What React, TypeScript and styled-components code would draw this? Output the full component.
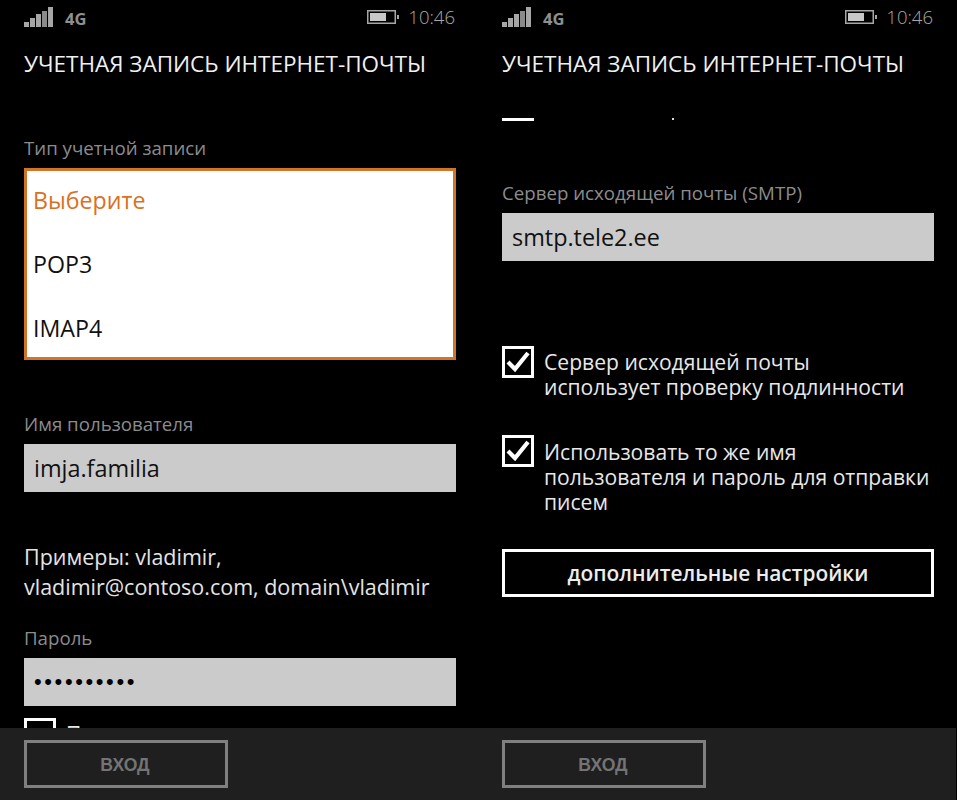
import React from 'react';
import styled, { createGlobalStyle } from 'styled-components';

const GlobalStyle = createGlobalStyle`
  html, body {
    margin: 0;
    padding: 0;
    background: #000;
  }
  * {
    box-sizing: border-box;
  }
`;

const SignalIcon: React.FC = () => (
  <svg width="30" height="20" viewBox="0 0 30 20" fill="#a6a6a6">
    <rect x="0" y="15" width="5" height="5" />
    <rect x="6" y="11" width="5" height="9" />
    <rect x="12" y="7" width="5" height="13" />
    <rect x="18" y="4" width="5" height="16" fill="#8a8a8a" />
    <rect x="24" y="0" width="5" height="20" />
  </svg>
);

const BatteryIcon: React.FC = () => (
  <svg width="32" height="14" viewBox="0 0 32 14">
    <rect x="0.75" y="0.75" width="27.5" height="12.5" fill="none" stroke="#a6a6a6" strokeWidth="1.5" />
    <rect x="3" y="3" width="16" height="8" fill="#c8c8c8" />
    <rect x="30" y="5" width="2" height="4" fill="#a6a6a6" />
  </svg>
);

const CheckIcon: React.FC = () => (
  <svg width="26" height="26" viewBox="0 0 26 26">
    <path d="M3 13 L10 20 L23 4" fill="none" stroke="#fff" strokeWidth="4.2" />
  </svg>
);

const StatusBar: React.FC = () => (
  <StatusRow>
    <SignalIcon />
    <Network>4G</Network>
    <StatusRight>
      <BatteryIcon />
      <Clock>10:46</Clock>
    </StatusRight>
  </StatusRow>
);

const App: React.FC = () => (
  <>
    <GlobalStyle />
    <Page>
      <Phone>
        <StatusBar />
        <Title>УЧЕТНАЯ ЗАПИСЬ ИНТЕРНЕТ-ПОЧТЫ</Title>
        <Content>
          <Label $top={18}>Тип учетной записи</Label>
          <Select>
            <Option $active>Выберите</Option>
            <Option>POP3</Option>
            <Option>IMAP4</Option>
          </Select>
          <Label $top={52}>Имя пользователя</Label>
          <Input>imja.familia</Input>
          <Hint>
            Примеры: vladimir,
            <br />
            vladimir@contoso.com, domain\vladimir
          </Hint>
          <Label $top={24}>Пароль</Label>
          <Input>
            <Dots>••••••••••</Dots>
          </Input>
          <CheckRow $top={12}>
            <CheckBox />
            <CheckText $top={3}>Показать пароль</CheckText>
          </CheckRow>
        </Content>
        <Footer>
          <LoginButton>ВХОД</LoginButton>
        </Footer>
      </Phone>
      <Phone>
        <StatusBar />
        <Title>УЧЕТНАЯ ЗАПИСЬ ИНТЕРНЕТ-ПОЧТЫ</Title>
        <Content>
          <ScrolledEdge>
            <EdgeBar />
            <EdgeDot />
          </ScrolledEdge>
          <Label $top={60}>Сервер исходящей почты (SMTP)</Label>
          <Input>smtp.tele2.ee</Input>
          <CheckRow $top={85}>
            <CheckBox>
              <CheckIcon />
            </CheckBox>
            <CheckText $top={3}>
              Сервер исходящей почты
              <br />
              использует проверку подлинности
            </CheckText>
          </CheckRow>
          <CheckRow $top={36}>
            <CheckBox>
              <CheckIcon />
            </CheckBox>
            <CheckText $top={4}>
              Использовать то же имя
              <br />
              пользователя и пароль для отправки
              <br />
              писем
            </CheckText>
          </CheckRow>
          <WideButton>дополнительные настройки</WideButton>
        </Content>
        <Footer>
          <LoginButton>ВХОД</LoginButton>
        </Footer>
      </Phone>
    </Page>
  </>
);

export default App;

const Page = styled.div`
  width: 957px;
  height: 800px;
  display: grid;
  grid-template-columns: 478px 479px;
  background: #000;
  font-family: 'Open Sans', 'Noto Sans', sans-serif;
  overflow: hidden;
`;

const Phone = styled.div`
  width: 478px;
  height: 800px;
  display: flex;
  flex-direction: column;
`;

const StatusRow = styled.div`
  height: 34px;
  padding: 7px 23px 0 24px;
  display: flex;
  align-items: flex-start;
  flex: none;
`;

const Network = styled.span`
  margin: 2px 0 0 11px;
  font-size: 16.5px;
  line-height: 20px;
  font-weight: 700;
  color: #8f8f8f;
`;

const StatusRight = styled.div`
  margin-left: auto;
  display: flex;
  align-items: center;
  gap: 9px;
  height: 20px;
`;

const Clock = styled.span`
  font-size: 18.5px;
  line-height: 20px;
  font-weight: 300;
  color: #a8a8a8;
`;

const Title = styled.h1`
  margin: 15px 0 0;
  padding-left: 24px;
  height: 30px;
  flex: none;
  font-size: 22.5px;
  line-height: 30px;
  font-weight: 500;
  color: #f0f0f0;
  white-space: nowrap;
`;

const Content = styled.div`
  flex: 1;
  min-height: 0;
  margin-top: 39px;
  padding: 0 22px 0 24px;
  overflow: hidden;
`;

const Label = styled.div<{ $top: number }>`
  margin-top: ${({ $top }) => $top}px;
  height: 24px;
  font-size: 18.7px;
  line-height: 24px;
  color: #8c8c8c;
  white-space: nowrap;
`;

const Select = styled.div`
  margin-top: 8px;
  height: 192px;
  background: #fff;
  border: 3px solid #cf7428;
  display: flex;
  flex-direction: column;
  justify-content: center;
`;

const Option = styled.div<{ $active?: boolean }>`
  height: 64px;
  flex: none;
  padding: 0 0 0 6px;
  display: flex;
  align-items: center;
  font-size: 23.2px;
  color: ${({ $active }) => ($active ? '#d9711f' : '#111')};
`;

const Input = styled.div`
  margin-top: 8px;
  height: 48px;
  background: #cbcbcb;
  padding-left: 10px;
  display: flex;
  align-items: center;
  font-size: 23.4px;
  color: #111;
`;

const Dots = styled.span`
  font-size: 22px;
  letter-spacing: 2.6px;
  font-family: 'Liberation Sans', sans-serif;
  color: #000;
`;

const Hint = styled.div`
  margin-top: 50px;
  font-size: 21.5px;
  line-height: 30px;
  color: #e4e4e4;
  white-space: nowrap;
`;

const CheckRow = styled.div<{ $top: number }>`
  margin-top: ${({ $top }) => $top}px;
  display: flex;
  align-items: flex-start;
  gap: 10px;
`;

const CheckBox = styled.div`
  width: 32px;
  height: 32px;
  flex: none;
  border: 3px solid #fff;
  display: flex;
  align-items: center;
  justify-content: center;
`;

const CheckText = styled.div<{ $top: number }>`
  margin-top: ${({ $top }) => $top}px;
  font-size: 21.1px;
  line-height: 25px;
  color: #e8e8e8;
  white-space: nowrap;
`;

const ScrolledEdge = styled.div`
  height: 3px;
  display: flex;
  align-items: flex-start;
`;

const EdgeBar = styled.div`
  width: 32px;
  height: 3px;
  background: #fff;
`;

const EdgeDot = styled.div`
  width: 2px;
  height: 2px;
  margin-left: 138px;
  background: #ddd;
`;

const WideButton = styled.div`
  margin-top: 35px;
  height: 48px;
  border: 3px solid #fff;
  display: flex;
  align-items: center;
  justify-content: center;
  font-size: 20.9px;
  font-weight: 600;
  color: #ececec;
`;

const Footer = styled.div`
  height: 72px;
  flex: none;
  background: #1f1f1f;
  padding: 12px 24px;
`;

const LoginButton = styled.div`
  width: 204px;
  height: 48px;
  border: 3px solid #808080;
  padding: 2px 2px 0 0;
  display: flex;
  align-items: center;
  justify-content: center;
  font-family: 'Liberation Sans', sans-serif;
  font-size: 17.6px;
  font-weight: 700;
  color: #747474;
`;
